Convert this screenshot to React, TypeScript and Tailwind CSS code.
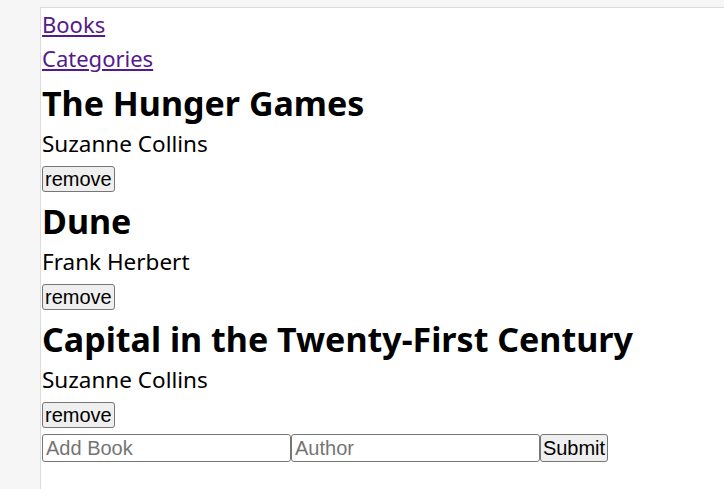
import React from 'react';

type Book = { title: string; author: string };

const books: Book[] = [
  { title: 'The Hunger Games', author: 'Suzanne Collins' },
  { title: 'Dune', author: 'Frank Herbert' },
  { title: 'Capital in the Twenty-First Century', author: 'Suzanne Collins' },
];

const BookItem: React.FC<{ book: Book; first: boolean }> = ({ book, first }) => (
  <div className={first ? 'mt-[10px] flex flex-col items-start' : 'mt-[9px] flex flex-col items-start'}>
    <h1 className="h-[40px] text-[34px] font-bold leading-[40px] text-black">{book.title}</h1>
    <p className="mt-[6px] h-[30px] text-[22.5px] leading-[30px] text-black">{book.author}</p>
    <button
      type="button"
      className="mt-[7px] h-[26px] rounded-[3px] border border-[#767676] bg-[#efefef] px-[2px] font-['Liberation_Sans',Arial,sans-serif] text-[20px] leading-[22px] text-black"
    >
      remove
    </button>
  </div>
);

export default function App() {
  return (
    <div className="min-h-[489px] bg-[#f6f6f6] pl-[40px] pt-[7px] font-['Noto_Sans',sans-serif]">
      <div className="min-h-[482px] border-l border-t border-[#dcdcdc] bg-white pl-[1px] pt-[1px]">
        <nav className="flex flex-col items-start">
          <a href="#books" className="h-[30px] text-[22px] leading-[30px] text-[#551a8b] underline">
            Books
          </a>
          <a href="#categories" className="mt-[4px] h-[30px] text-[22px] leading-[30px] text-[#551a8b] underline">
            Categories
          </a>
        </nav>
        {books.map((b, i) => (
          <BookItem key={b.title} book={b} first={i === 0} />
        ))}
        <form className="mt-[6px] flex font-['Liberation_Sans',Arial,sans-serif]" onSubmit={(e) => e.preventDefault()}>
          <input
            placeholder="Add Book"
            className="h-[28px] w-[249px] rounded-[3px] border border-[#767676] px-[3px] text-[20px] text-black placeholder:text-[#757575]"
          />
          <input
            placeholder="Author"
            className="h-[28px] w-[249px] rounded-[3px] border border-[#767676] px-[3px] text-[20px] text-black placeholder:text-[#757575]"
          />
          <button
            type="submit"
            className="h-[28px] w-[68px] rounded-[3px] border border-[#767676] bg-[#efefef] text-[20px] leading-[22px] text-black"
          >
            Submit
          </button>
        </form>
      </div>
    </div>
  );
}
